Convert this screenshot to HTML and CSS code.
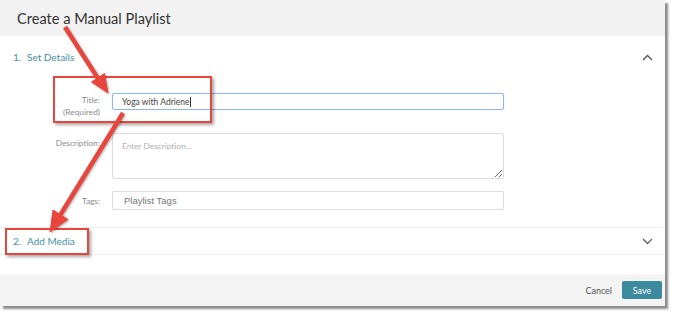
FILE: index.html
```html
<!DOCTYPE html>
<html>
<head>
<meta charset="utf-8">
<link rel="stylesheet" href="styles.css">
</head>
<body>
<div class="dialog">
  <header class="dlg-head"><h1 class="dlg-title">Create a Manual Playlist</h1></header>
  <section class="step">
    <div class="step-head">
      <span class="step-num">1.</span><span class="step-name">Set Details</span>
      <svg class="chev" width="11" height="7" viewBox="0 0 11 7"><path d="M1 6 L5.5 1.5 L10 6" fill="none" stroke="#555" stroke-width="1.4"/></svg>
    </div>
    <div class="form">
      <div class="lbl lbl-title">Title:<br>(Required)</div>
      <div class="field field-focus"><span class="val">Yoga with Adriene</span><span class="caret"></span></div>
      <div class="lbl lbl-desc">Description:</div>
      <textarea class="area" placeholder="Enter Description..."></textarea>
      <div class="lbl lbl-tags">Tags:</div>
      <div class="field field-tags"><span class="ph">Playlist Tags</span></div>
    </div>
  </section>
  <section class="step step-closed">
    <div class="step-head step-head-sm">
      <span class="step-num">2.</span><span class="step-name">Add Media</span>
      <svg class="chev" width="11" height="7" viewBox="0 0 11 7"><path d="M1 1 L5.5 5.5 L10 1" fill="none" stroke="#666" stroke-width="1.4"/></svg>
    </div>
  </section>
  <div class="spacer"></div>
  <footer class="dlg-foot">
    <span class="cancel">Cancel</span>
    <button class="save">Save</button>
  </footer>
</div>

<div class="callout callout-1"></div>
<div class="callout callout-2"></div>
<svg class="arrows" width="676" height="315" viewBox="0 0 676 315">
  <g fill="#e8463c" stroke="#e8463c">
    <line x1="65" y1="27" x2="99" y2="80" stroke-width="4.5"/>
    <polygon points="108,93 104.5,73.5 91.5,82" stroke-width="1" stroke-linejoin="round"/>
    <line x1="123" y1="113" x2="59" y2="217" stroke-width="4.5"/>
    <polygon points="50,232 68,219.5 53,210" stroke-width="1" stroke-linejoin="round"/>
  </g>
</svg>
</body>
</html>
```

FILE: styles.css
```css
html, body {
  margin: 0;
  padding: 0;
  background: #ffffff;
}
body {
  width: 676px;
  height: 315px;
  position: relative;
  overflow: hidden;
  font-family: Lato, "Open Sans", sans-serif;
}
.dialog {
  width: 665px;
  height: 306px;
  background: #fff;
  display: flex;
  flex-direction: column;
  box-shadow: 3px 3px 2px rgba(0,0,0,0.45);
}
.dlg-head {
  height: 36px;
  background: #f2f2f2;
  display: flex;
  align-items: center;
  padding-left: 17px;
  flex: none;
}
.dlg-title {
  margin: 0;
  font-size: 14.6px;
  font-weight: 400;
  color: #333;
}
.step {
  border-bottom: 1px solid #efefef;
  margin-right: 2px;
  flex: none;
}
.step-head {
  height: 42px;
  display: flex;
  align-items: center;
  padding: 0 10px 0 13px;
  color: #3f90aa;
  font-size: 10px;
}
.step-head-sm {
  height: 26px;
}
.step-num {
  width: 14px;
}
.step-name {
  flex: 1;
}
.chev {
  display: block;
}
.form {
  display: grid;
  grid-template-columns: 100px 392px;
  grid-template-rows: 40px 58px 19px;
  column-gap: 12px;
  padding: 15px 0 17px 0;
}
.lbl {
  text-align: right;
  color: #8c8c8c;
  font-size: 8.3px;
  line-height: 12px;
}
.lbl-title {
  padding-top: 1px;
}
.lbl-desc {
  padding-top: 4px;
}
.lbl-tags {
  align-self: center;
}
.field {
  box-sizing: border-box;
  border: 1px solid #ddd;
  border-radius: 2px;
  display: flex;
  align-items: center;
}
.field-focus {
  height: 17px;
  border-color: #8fb5f2;
  box-shadow: 0 0 1px rgba(110,160,240,0.5);
  padding-left: 9px;
  font-size: 8.5px;
  color: #444;
}
.caret {
  width: 1px;
  height: 10px;
  background: #333;
}
.area {
  box-sizing: border-box;
  width: 392px;
  height: 46px;
  margin: 0;
  border: 1px solid #ddd;
  border-radius: 2px;
  padding: 7px 9px;
  font-family: Lato, "Open Sans", sans-serif;
  font-size: 8.3px;
  color: #333;
  outline: none;
}
.area::placeholder {
  color: #b0b0b0;
}
.field-tags {
  height: 19px;
  padding-left: 11px;
}
.ph {
  font-family: "Liberation Sans", Arial, sans-serif;
  font-size: 9.5px;
  color: #777;
}
.spacer {
  height: 19px;
  flex: none;
}
.dlg-foot {
  flex: 1;
  background: #f4f4f4;
  display: flex;
  align-items: center;
  justify-content: flex-end;
  padding-right: 3px;
  gap: 10px;
}
.cancel {
  font-size: 9px;
  color: #555;
}
.save {
  width: 40px;
  height: 18px;
  border: none;
  border-radius: 2px;
  background: #3b8a9d;
  color: #fff;
  font-family: Lato, "Open Sans", sans-serif;
  font-size: 9px;
  padding: 0;
}
.callout {
  position: absolute;
  box-sizing: border-box;
  border: 2px solid #e8463c;
  box-shadow: 2px 2px 3px rgba(0,0,0,0.35);
}
.callout-1 {
  left: 53px;
  top: 76px;
  width: 159px;
  height: 47px;
}
.callout-2 {
  left: 5px;
  top: 228px;
  width: 84px;
  height: 27px;
}
.arrows {
  position: absolute;
  left: 0;
  top: 0;
  filter: drop-shadow(1.5px 1.5px 1px rgba(0,0,0,0.3));
}
```
